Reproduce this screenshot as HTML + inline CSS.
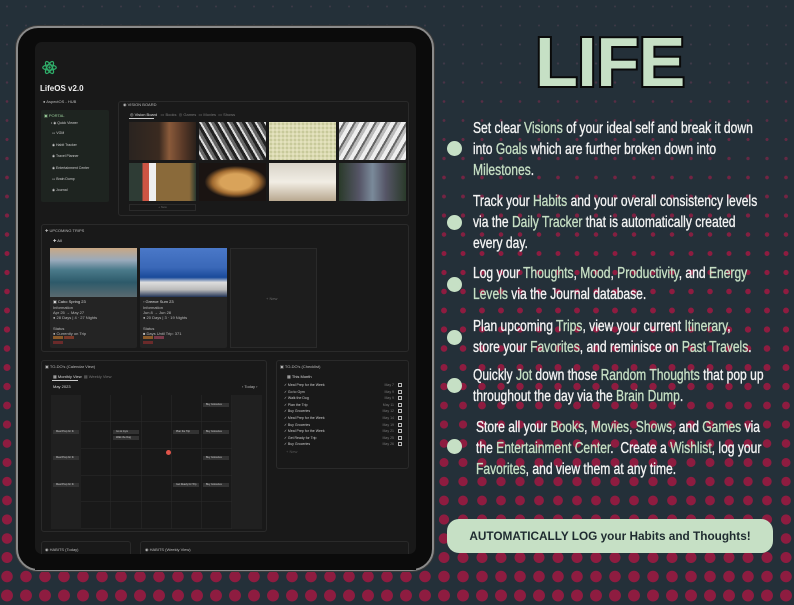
<!DOCTYPE html>
<html><head><meta charset="utf-8">
<style>
*{margin:0;padding:0;box-sizing:border-box}
body{width:794px;height:596px;overflow:hidden;background:#243039;position:relative;font-family:"Liberation Sans",sans-serif}
.b{position:absolute;left:0;width:794px;height:19px;background-size:19px 19px;background-position:-2.5px 0}
.a{position:absolute}
.t{position:absolute;font-size:4px;color:#bbb;white-space:nowrap}
.txt{position:absolute;left:473px;font-family:"Liberation Sans",sans-serif;font-size:16px;line-height:21px;color:#f3f3f3;white-space:nowrap;transform:scaleX(0.755);transform-origin:0 0;-webkit-text-stroke:0.35px currentColor}
.txt i{font-style:normal;color:#c6dfc4}
.dot{position:absolute;left:447px;width:15px;height:15px;border-radius:50%;background:#c6e0c5}
.pn{position:absolute;border:1px solid #2a2a2a;border-radius:3px}
.img{position:absolute}
.item{position:absolute;left:46px;font-size:3.5px;color:#ccc}
.ev{position:absolute;height:4px;width:26px;background:#333;font-size:2.5px;color:#ccc;padding-left:3px;line-height:4px}
.cl{position:absolute;left:284px;font-size:3.5px;color:#ccc;width:118px}
.cl span{position:absolute;right:8px;color:#777}
.cl b{position:absolute;right:0;top:0;width:4px;height:4px;border:0.7px solid #bbb}
</style></head><body>
<div class="b" style="top:-3.5px;background-image:radial-gradient(circle at 9.5px 9.5px,#3f3a48 0.7px,transparent 1.2px)"></div>
<div class="b" style="top:15.5px;background-image:radial-gradient(circle at 9.5px 9.5px,#3f3a48 0.7px,transparent 1.2px)"></div>
<div class="b" style="top:34.5px;background-image:radial-gradient(circle at 9.5px 9.5px,#3f3a48 0.75px,transparent 1.25px)"></div>
<div class="b" style="top:53.5px;background-image:radial-gradient(circle at 9.5px 9.5px,#3f3a48 0.85px,transparent 1.35px)"></div>
<div class="b" style="top:72.5px;background-image:radial-gradient(circle at 9.5px 9.5px,#4a3447 0.95px,transparent 1.45px)"></div>
<div class="b" style="top:91.5px;background-image:radial-gradient(circle at 9.5px 9.5px,#5a2d45 1.05px,transparent 1.55px)"></div>
<div class="b" style="top:110.5px;background-image:radial-gradient(circle at 9.5px 9.5px,#5a2d45 1.15px,transparent 1.65px)"></div>
<div class="b" style="top:129.5px;background-image:radial-gradient(circle at 9.5px 9.5px,#652944 1.3px,transparent 1.8px)"></div>
<div class="b" style="top:148.5px;background-image:radial-gradient(circle at 9.5px 9.5px,#652944 1.45px,transparent 1.95px)"></div>
<div class="b" style="top:167.5px;background-image:radial-gradient(circle at 9.5px 9.5px,#742443 1.6px,transparent 2.1px)"></div>
<div class="b" style="top:186.5px;background-image:radial-gradient(circle at 9.5px 9.5px,#742443 1.7px,transparent 2.2px)"></div>
<div class="b" style="top:205.5px;background-image:radial-gradient(circle at 9.5px 9.5px,#7e2142 1.85px,transparent 2.35px)"></div>
<div class="b" style="top:224.5px;background-image:radial-gradient(circle at 9.5px 9.5px,#842041 2px,transparent 2.5px)"></div>
<div class="b" style="top:243.5px;background-image:radial-gradient(circle at 9.5px 9.5px,#8e1c40 2.2px,transparent 2.7px)"></div>
<div class="b" style="top:262.5px;background-image:radial-gradient(circle at 9.5px 9.5px,#8e1c40 2.35px,transparent 2.85px)"></div>
<div class="b" style="top:281.5px;background-image:radial-gradient(circle at 9.5px 9.5px,#8e1c40 2.5px,transparent 3px)"></div>
<div class="b" style="top:300.5px;background-image:radial-gradient(circle at 9.5px 9.5px,#8e1c40 2.65px,transparent 3.15px)"></div>
<div class="b" style="top:319.5px;background-image:radial-gradient(circle at 9.5px 9.5px,#8e1c40 2.85px,transparent 3.35px)"></div>
<div class="b" style="top:338.5px;background-image:radial-gradient(circle at 9.5px 9.5px,#8e1c40 3px,transparent 3.5px)"></div>
<div class="b" style="top:357.5px;background-image:radial-gradient(circle at 9.5px 9.5px,#8e1c40 3.2px,transparent 3.7px)"></div>
<div class="b" style="top:376.5px;background-image:radial-gradient(circle at 9.5px 9.5px,#8e1c40 3.4px,transparent 3.9px)"></div>
<div class="b" style="top:395.5px;background-image:radial-gradient(circle at 9.5px 9.5px,#8e1c40 3.6px,transparent 4.1px)"></div>
<div class="b" style="top:414.5px;background-image:radial-gradient(circle at 9.5px 9.5px,#8e1c40 3.8px,transparent 4.3px)"></div>
<div class="b" style="top:433.5px;background-image:radial-gradient(circle at 9.5px 9.5px,#8e1c40 4px,transparent 4.5px)"></div>
<div class="b" style="top:452.5px;background-image:radial-gradient(circle at 9.5px 9.5px,#8e1c40 4.2px,transparent 4.7px)"></div>
<div class="b" style="top:471.5px;background-image:radial-gradient(circle at 9.5px 9.5px,#8e1c40 4.4px,transparent 4.9px)"></div>
<div class="b" style="top:490.5px;background-image:radial-gradient(circle at 9.5px 9.5px,#8e1c40 4.6px,transparent 5.1px)"></div>
<div class="b" style="top:509.5px;background-image:radial-gradient(circle at 9.5px 9.5px,#8e1c40 4.8px,transparent 5.3px)"></div>
<div class="b" style="top:528.5px;background-image:radial-gradient(circle at 9.5px 9.5px,#8e1c40 5px,transparent 5.5px)"></div>
<div class="b" style="top:547.5px;background-image:radial-gradient(circle at 9.5px 9.5px,#8e1c40 5.25px,transparent 5.75px)"></div>
<div class="b" style="top:566.5px;background-image:radial-gradient(circle at 9.5px 9.5px,#8e1c40 5.5px,transparent 6px)"></div>
<div class="b" style="top:585.5px;background-image:radial-gradient(circle at 9.5px 9.5px,#8e1c40 5.7px,transparent 6.2px)"></div>

<div class="a" style="left:16px;top:26px;width:418px;height:545px;border-radius:22px;background:#0b0b0b;border:2px solid #8a8a8a;box-shadow:0 0 0 1px #3a3a3a"></div>
<div class="a" style="left:35px;top:42px;width:381px;height:512px;border-radius:7px;background:#191919;overflow:hidden">
</div>
<svg class="a" style="left:42px;top:60px" width="15" height="15" viewBox="0 0 20 20"><g fill="none" stroke="#2fae6a" stroke-width="1.6"><ellipse cx="10" cy="10" rx="9" ry="3.5"/><ellipse cx="10" cy="10" rx="9" ry="3.5" transform="rotate(60 10 10)"/><ellipse cx="10" cy="10" rx="9" ry="3.5" transform="rotate(120 10 10)"/></g><circle cx="10" cy="10" r="1.6" fill="#2fae6a"/></svg>
<div class="a" style="left:40px;top:84px;font-size:8px;font-weight:bold;color:#eee">LifeOS v2.0</div>
<div class="t" style="left:43px;top:99px">● AspectOS - HUB</div>
<div class="a" style="left:41px;top:110px;width:68px;height:92px;background:#1e2420;border-radius:2px"></div>
<div class="t" style="left:44px;top:113px;color:#9c9">▣ PORTAL</div>
<div class="item" style="top:121px;left:51px">• ◉ Quick Viewer</div>
<div class="item" style="top:131px;left:52px">▭ VGM</div>
<div class="item" style="top:143px;left:52px">◉ Habit Tracker</div>
<div class="item" style="top:154px;left:52px">◉ Travel Planner</div>
<div class="item" style="top:166px;left:52px">◉ Entertainment Center</div>
<div class="item" style="top:177px;left:52px">▭ Brain Dump</div>
<div class="item" style="top:188px;left:52px">◉ Journal</div>
<div class="pn" style="left:118px;top:101px;width:291px;height:115px"></div>
<div class="t" style="left:123px;top:102px">◉ VISION BOARD</div>
<div class="t" style="left:130px;top:112px;color:#ddd">◎ Vision Board &nbsp; <span style="color:#777">▭ Books &nbsp;◎ Games &nbsp;▭ Movies &nbsp;▭ Shows</span></div>
<div class="a" style="left:129px;top:118px;width:25px;height:1px;background:#ccc"></div>
<div class="img" style="left:129px;top:122px;width:67px;height:38px;background:linear-gradient(90deg,#2a2420,#3a2a20 45%,#8a5a3a 60%,#5a3a28 80%,#2a201a)"></div>
<div class="img" style="left:199px;top:122px;width:67px;height:38px;background:repeating-linear-gradient(60deg,#222 0 3px,#ddd 3px 5px,#666 5px 8px)"></div>
<div class="img" style="left:269px;top:122px;width:67px;height:38px;background:radial-gradient(circle,#c7c99a 1px,#e6e4c0 2px);background-size:4px 4px"></div>
<div class="img" style="left:339px;top:122px;width:67px;height:38px;background:repeating-linear-gradient(120deg,#eee 0 4px,#666 4px 6px,#bbb 6px 9px)"></div>
<div class="img" style="left:129px;top:163px;width:67px;height:38px;background:linear-gradient(90deg,#2e3c35 0 20%,#c54 20% 30%,#eee 30% 40%,#8a6a3a 40% 90%,#2a3a30)"></div>
<div class="img" style="left:199px;top:163px;width:67px;height:38px;background:radial-gradient(ellipse at 55% 50%,#d9a35a 0 30%,#a06a30 45%,#1a1412 60%)"></div>
<div class="img" style="left:269px;top:163px;width:67px;height:38px;background:linear-gradient(180deg,#d8d3c8,#f1ede4 50%,#b8a890)"></div>
<div class="img" style="left:339px;top:163px;width:67px;height:38px;background:linear-gradient(90deg,#2a3a2a,#556 30%,#7a8a9a 50%,#556 70%,#2a3a2a)"></div>
<div class="a" style="left:129px;top:204px;width:67px;height:7px;border:1px solid #2a2a2a;font-size:3px;color:#666;text-align:center">+ New</div>
<div class="pn" style="left:41px;top:224px;width:368px;height:128px"></div>
<div class="t" style="left:45px;top:228px">✚ UPCOMING TRIPS</div>
<div class="t" style="left:53px;top:238px;color:#ddd">✚ All</div>
<div class="a" style="left:50px;top:248px;width:87px;height:100px;background:#242424;border-radius:2px"></div>
<div class="img" style="left:50px;top:248px;width:87px;height:49px;background:linear-gradient(180deg,#c9a884 0,#9ab 25%,#4a7a8a 45%,#2d5a6a 70%,#5a6a70)"></div>
<div class="a" style="left:140px;top:248px;width:87px;height:100px;background:#242424;border-radius:2px"></div>
<div class="img" style="left:140px;top:248px;width:87px;height:49px;background:linear-gradient(180deg,#4a78c8 0,#3a68b8 40%,#1a4a9a 60%,#ddd 70%,#bbb 85%,#235)"></div>
<div class="a" style="left:230px;top:248px;width:87px;height:100px;background:#1d1d1d;border:1px solid #2a2a2a"></div>
<div class="t" style="left:266px;top:296px;color:#666">+ New</div>
<div class="t" style="left:53px;top:299px;color:#ddd">▣ Cabo Spring 23</div>
<div class="t" style="left:53px;top:305px">Information</div>
<div class="t" style="left:53px;top:310px">Apr 25 → May 27</div>
<div class="t" style="left:53px;top:315px">● 28 Days | 4 · 27 Nights</div>
<div class="t" style="left:53px;top:326px">Status</div>
<div class="t" style="left:53px;top:331px">● Currently on Trip</div>
<div class="a" style="left:53px;top:336px;width:10px;height:3px;background:#8a5a2a"></div><div class="a" style="left:64px;top:336px;width:10px;height:3px;background:#7a3a2a"></div><div class="a" style="left:53px;top:341px;width:10px;height:3px;background:#6a2a2a"></div>
<div class="t" style="left:143px;top:299px;color:#ddd">▫ Greece Sum 23</div>
<div class="t" style="left:143px;top:305px">Information</div>
<div class="t" style="left:143px;top:310px">Jun 8 → Jun 28</div>
<div class="t" style="left:143px;top:315px">● 20 Days | 3 · 19 Nights</div>
<div class="t" style="left:143px;top:326px">Status</div>
<div class="t" style="left:143px;top:331px">■ Days Until Trip: 371</div>
<div class="a" style="left:143px;top:336px;width:10px;height:3px;background:#8a5a2a"></div><div class="a" style="left:154px;top:336px;width:10px;height:3px;background:#7a3a4a"></div><div class="a" style="left:143px;top:341px;width:10px;height:3px;background:#6a2a2a"></div>
<div class="pn" style="left:41px;top:360px;width:226px;height:172px"></div>
<div class="t" style="left:45px;top:364px">▣ TO-DO's (Calendar View)</div>
<div class="t" style="left:53px;top:374px;color:#ddd">▦ Monthly View &nbsp;<span style="color:#777">▦ Weekly View</span></div>
<div class="a" style="left:52px;top:380px;width:26px;height:1px;background:#ccc"></div>
<div class="t" style="left:53px;top:384px;color:#ddd">May 2023</div>
<div class="t" style="left:242px;top:384px">‹ Today ›</div>
<div class="a" style="left:51px;top:395px;width:211px;height:134px;background:
linear-gradient(90deg,#202020 0 30px,transparent 30px 181px,#202020 181px),
repeating-linear-gradient(90deg,transparent 0 29.6px,#2b2b2b 29.6px 30.1px),
repeating-linear-gradient(180deg,transparent 0 26.3px,#2b2b2b 26.3px 26.8px),#191919"></div>
<div class="ev" style="left:203px;top:403px">Buy Groceries</div>
<div class="ev" style="left:53px;top:430px">Meal Prep for th</div>
<div class="ev" style="left:113px;top:430px">Go to Gym</div>
<div class="ev" style="left:113px;top:436px">Walk the Dog</div>
<div class="ev" style="left:173px;top:430px">Plan the Trip</div>
<div class="ev" style="left:203px;top:430px">Buy Groceries</div>
<div class="ev" style="left:53px;top:456px">Meal Prep for th</div>
<div class="a" style="left:166px;top:450px;width:5px;height:5px;border-radius:50%;background:#e0544a"></div>
<div class="ev" style="left:203px;top:456px">Buy Groceries</div>
<div class="ev" style="left:53px;top:483px">Meal Prep for th</div>
<div class="ev" style="left:173px;top:483px">Get Ready for Trip</div>
<div class="ev" style="left:203px;top:483px">Buy Groceries</div>
<div class="pn" style="left:276px;top:360px;width:133px;height:109px"></div>
<div class="t" style="left:280px;top:364px">▣ TO-DO's (Checklist)</div>
<div class="t" style="left:287px;top:374px;color:#ddd">▦ This Month</div>
<div class="cl" style="top:383px">✓ Meal Prep for the Week<span>May 7</span><b></b></div>
<div class="cl" style="top:389.6px">✓ Go to Gym<span>May 9</span><b></b></div>
<div class="cl" style="top:396.2px">✓ Walk the Dog<span>May 9</span><b></b></div>
<div class="cl" style="top:402.8px">✓ Plan the Trip<span>May 11</span><b></b></div>
<div class="cl" style="top:409.4px">✓ Buy Groceries<span>May 12</span><b></b></div>
<div class="cl" style="top:416px">✓ Meal Prep for the Week<span>May 14</span><b></b></div>
<div class="cl" style="top:422.6px">✓ Buy Groceries<span>May 19</span><b></b></div>
<div class="cl" style="top:429.2px">✓ Meal Prep for the Week<span>May 21</span><b></b></div>
<div class="cl" style="top:435.8px">✓ Get Ready for Trip<span>May 25</span><b></b></div>
<div class="cl" style="top:442.4px">✓ Buy Groceries<span>May 26</span><b></b></div>
<div class="t" style="left:286px;top:449px;color:#555">+ New</div>
<div class="pn" style="left:41px;top:541px;width:90px;height:20px;border-bottom:none"></div>
<div class="pn" style="left:140px;top:541px;width:269px;height:20px;border-bottom:none"></div>
<div class="t" style="left:45px;top:547px">◉ HABITS (Today)</div>
<div class="t" style="left:145px;top:547px">◉ HABITS (Weekly View)</div>
<div class="a" style="left:35px;top:554px;width:381px;height:16px;background:#0b0b0b"></div>

<div class="a" style="left:510px;top:22px;width:200px;text-align:center;font-family:'Liberation Sans',sans-serif;font-weight:bold;font-size:70px;line-height:80px;color:#c6e0c5;-webkit-text-stroke:4px #0a0a0a;paint-order:stroke fill;letter-spacing:-0.5px">LIFE</div>

<div class="dot" style="top:141px"></div>
<div class="txt" style="top:118px">Set clear <i>Visions</i> of your ideal self and break it down<br>into <i>Goals</i> which are further broken down into<br><i>Milestones</i>.</div>
<div class="dot" style="top:215px"></div>
<div class="txt" style="top:191px">Track your <i>Habits</i> and your overall consistency levels<br>via the <i>Daily Tracker</i> that is automatically created<br>every day.</div>
<div class="dot" style="top:277px"></div>
<div class="txt" style="top:263px">Log your <i>Thoughts</i>, <i>Mood</i>, <i>Productivity</i>, and <i>Energy</i><br><i>Levels</i> via the Journal database.</div>
<div class="dot" style="top:330px"></div>
<div class="txt" style="top:316px">Plan upcoming <i>Trips</i>, view your current <i>Itinerary</i>,<br>store your <i>Favorites</i>, and reminisce on <i>Past Travels</i>.</div>
<div class="dot" style="top:378px"></div>
<div class="txt" style="top:365px">Quickly <i>Jot</i> down those <i>Random Thoughts</i> that pop up<br>throughout the day via the <i>Brain Dump</i>.</div>
<div class="dot" style="top:439px"></div>
<div class="txt" style="top:417px;left:476px">Store all your <i>Books</i>, <i>Movies</i>, <i>Shows</i>, and <i>Games</i> via<br>the <i>Entertainment Center</i>.&nbsp; Create a <i>Wishlist</i>, log your<br><i>Favorites</i>, and view them at any time.</div>

<div class="a" style="left:447px;top:519px;width:326px;height:34px;border-radius:12px;background:#c6e0c5;text-align:center;line-height:34px;font-size:11.8px;font-weight:bold;color:#1f2b30">AUTOMATICALLY LOG your Habits and Thoughts!</div>
</body></html>
